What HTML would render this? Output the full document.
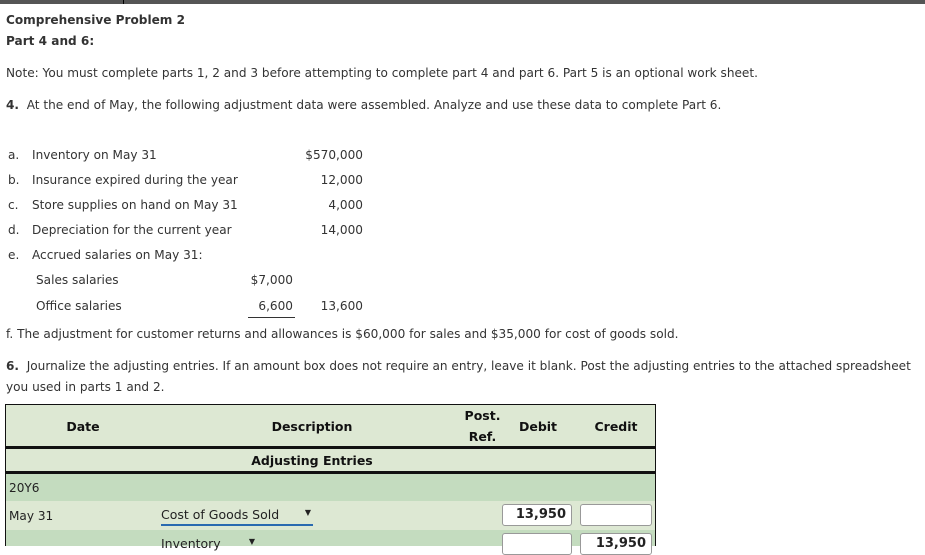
<!DOCTYPE html>
<html><head><style>
body{margin:0;width:925px;height:546px;overflow:hidden;background:#fff;font-family:"DejaVu Sans","Liberation Sans",sans-serif;font-size:12.1px;color:#333;position:relative}
.a{position:absolute;white-space:nowrap}
.b{font-weight:bold}
.r{text-align:right}
.th{position:absolute;font-weight:bold;color:#111;font-size:12.5px;text-align:center}
.in{position:absolute;background:#fff;border:1px solid #999;border-radius:3px;height:22px;font-size:13px;font-weight:bold;text-align:right;box-sizing:border-box;padding:2px 5px;color:#222}
.sel{position:absolute;font-size:12.5px;color:#222}
</style></head><body>
<div class="a" style="left:0;top:0;width:925px;height:4px;background:#555"></div>
<div class="a" style="left:123px;top:0;width:1px;height:4px;background:#000"></div>
<div class="a b" style="left:6px;top:13px">Comprehensive Problem 2</div>
<div class="a b" style="left:6px;top:34px">Part 4 and 6:</div>
<div class="a" style="left:6px;top:66px">Note: You must complete parts 1, 2 and 3 before attempting to complete part 4 and part 6. Part 5 is an optional work sheet.</div>
<div class="a" style="left:6px;top:98px"><b>4.</b>&nbsp; At the end of May, the following adjustment data were assembled. Analyze and use these data to complete Part 6.</div>

<div class="a" style="left:8px;top:148px">a.</div><div class="a" style="left:32px;top:148px">Inventory on May 31</div><div class="a r" style="left:280px;width:83px;top:148px">$570,000</div>
<div class="a" style="left:8px;top:173px">b.</div><div class="a" style="left:32px;top:173px">Insurance expired during the year</div><div class="a r" style="left:280px;width:83px;top:173px">12,000</div>
<div class="a" style="left:8px;top:198px">c.</div><div class="a" style="left:32px;top:198px">Store supplies on hand on May 31</div><div class="a r" style="left:280px;width:83px;top:198px">4,000</div>
<div class="a" style="left:8px;top:223px">d.</div><div class="a" style="left:32px;top:223px">Depreciation for the current year</div><div class="a r" style="left:280px;width:83px;top:223px">14,000</div>
<div class="a" style="left:8px;top:248px">e.</div><div class="a" style="left:32px;top:248px">Accrued salaries on May 31:</div>
<div class="a" style="left:36px;top:273px">Sales salaries</div><div class="a r" style="left:220px;width:73px;top:273px">$7,000</div>
<div class="a" style="left:36px;top:299px">Office salaries</div><div class="a r" style="left:220px;width:73px;top:299px">6,600</div><div class="a r" style="left:290px;width:73px;top:299px">13,600</div>
<div class="a" style="left:248px;top:317px;width:47px;height:1px;background:#333"></div>
<div class="a" style="left:6px;top:327px">f. The adjustment for customer returns and allowances is $60,000 for sales and $35,000 for cost of goods sold.</div>
<div class="a" style="left:6px;top:359px"><b>6.</b>&nbsp; Journalize the adjusting entries. If an amount box does not require an entry, leave it blank. Post the adjusting entries to the attached spreadsheet</div>
<div class="a" style="left:6px;top:380px">you used in parts 1 and 2.</div>

<div class="a" style="left:5px;top:404px;width:651px;height:142px;background:#dde8d3;border:1px solid #111;border-bottom:none;box-sizing:border-box"></div>
<div class="a" style="left:6px;top:446px;width:649px;height:3px;background:#111"></div>
<div class="a" style="left:6px;top:471px;width:649px;height:3px;background:#111"></div>
<div class="a" style="left:6px;top:474px;width:649px;height:27px;background:#c4dcbf"></div>
<div class="a" style="left:6px;top:530px;width:649px;height:16px;background:#c4dcbf"></div>
<div class="th" style="left:50px;width:66px;top:419px">Date</div>
<div class="th" style="left:230px;width:164px;top:419px">Description</div>
<div class="th" style="left:455px;width:55px;top:405px;line-height:21px">Post.<br>Ref.</div>
<div class="th" style="left:508px;width:60px;top:419px">Debit</div>
<div class="th" style="left:583px;width:66px;top:419px">Credit</div>
<div class="th" style="left:200px;width:224px;top:453px">Adjusting Entries</div>
<div class="a" style="left:9px;top:481px;color:#222">20Y6</div>
<div class="a" style="left:9px;top:509px;color:#222">May 31</div>
<div class="sel" style="left:161px;top:507px;width:152px;height:19px;border-bottom:2px solid #2a6ab0;box-sizing:border-box">Cost of Goods Sold<span style="position:absolute;right:2px;top:1px;font-size:8px">▼</span></div>
<div class="sel" style="left:161px;top:536px;width:96px;height:14px">Inventory<span style="position:absolute;right:2px;top:1px;font-size:8px">▼</span></div>
<div class="in" style="left:502px;top:504px;width:70px">13,950</div>
<div class="in" style="left:580px;top:504px;width:72px"></div>
<div class="in" style="left:502px;top:533px;width:70px"></div>
<div class="in" style="left:580px;top:533px;width:72px">13,950</div>
</body></html>
